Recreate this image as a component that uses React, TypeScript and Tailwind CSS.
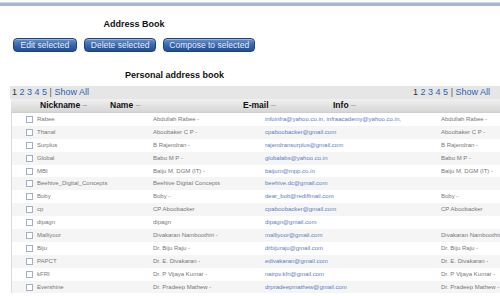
import React from "react";

interface Contact {
  nick: string;
  name: string;
  email: string;
  info: string;
}

const contacts: Contact[] = [
  { nick: "Rabee", name: "Abdullah Rabee -", email: "infoinfra@yahoo.co.in, infraacademy@yahoo.co.in,", info: "Abdullah Rabee -" },
  { nick: "Thanal", name: "Aboobaker C P -", email: "cpaboobacker@gmail.com", info: "Aboobaker C P -" },
  { nick: "Surplus", name: "B Rajendran -", email: "rajendransurplus@gmail.com", info: "B Rajendran -" },
  { nick: "Global", name: "Babu M P -", email: "globalabs@yahoo.co.in", info: "Babu M P -" },
  { nick: "MBI", name: "Baiju M, DGM (IT) -", email: "baijum@mpp.co.in", info: "Baiju M, DGM (IT) -" },
  { nick: "Beehive_Digital_Concepts", name: "Beehive Digital Concepts", email: "beehive.dc@gmail.com", info: "" },
  { nick: "Boby", name: "Boby -", email: "dear_bob@rediffmail.com", info: "Boby -" },
  { nick: "cp", name: "CP Aboobacker", email: "cpaboobacker@gmail.com", info: "CP Aboobacker" },
  { nick: "dipagn", name: "dipagn", email: "dipagn@gmail.com", info: "" },
  { nick: "Malliyoor", name: "Divakaran Namboothiri -", email: "malliyoor@gmail.com", info: "Divakaran Namboothiri -" },
  { nick: "Biju", name: "Dr. Biju Raju -", email: "drbijuraju@gmail.com", info: "Dr. Biju Raju -" },
  { nick: "PAPCT", name: "Dr. E. Divakaran -", email: "edivakaran@gmail.com", info: "Dr. E. Divakaran -" },
  { nick: "kFRI", name: "Dr. P Vijaya Kumar -", email: "nairpv.kfri@gmail.com", info: "Dr. P Vijaya Kumar -" },
  { nick: "Evershine", name: "Dr. Pradeep Mathew -", email: "drpradeepmathew@gmail.com", info: "Dr. Pradeep Mathew -" },
];

function Button({ label, width }: { label: string; width: string }) {
  return (
    <button
      className={`${width} h-[14px] rounded-[4px] border border-[#1d447f] bg-gradient-to-b from-[#6a91cc] via-[#3a68ad] to-[#204f94] text-[8.5px] leading-none text-[#e3eaf6] shadow-[inset_0_1px_0_rgba(255,255,255,0.35)]`}
    >
      {label}
    </button>
  );
}

function Pager() {
  return (
    <span className="text-[9px] text-[#333]">
      1{" "}
      <span className="text-[#2f62b0]">2 3 4 5</span>
      <span className="text-[#555]"> | </span>
      <span className="text-[#2f62b0]">Show All</span>
    </span>
  );
}

function HeaderCell({ label, className }: { label: string; className: string }) {
  return (
    <span className={`${className} font-bold text-[8.5px] text-[#111]`}>
      {label} <span className="font-normal text-[#999]">–</span>
    </span>
  );
}

export default function App() {
  return (
    <div className="w-[500px] h-[296px] overflow-hidden bg-white font-['Liberation_Sans',Arial,sans-serif]">
      <div className="mt-[2px] h-[1px] bg-[#d3dbe6]" />
      <div className="h-[3px] bg-[#a9b7cb]" />

      <div className="w-[242px] ml-[13px]">
        <h1 className="mt-[12px] text-center text-[9px] font-bold leading-[12px] text-[#111]">
          Address Book
        </h1>
        <div className="mt-[8px] flex gap-[7px]">
          <Button label="Edit selected" width="w-[64px]" />
          <Button label="Delete selected" width="w-[73px]" />
          <Button label="Compose to selected" width="w-[92px]" />
        </div>
      </div>

      <h2 className="mt-[17px] ml-[125px] text-[9px] font-bold leading-[12px] text-[#111]">
        Personal address book
      </h2>

      <div className="mt-[5px] ml-[10px] h-[13px] flex items-center justify-between bg-[#e6e6e6] pl-[2px] pr-[10px]">
        <Pager />
        <Pager />
      </div>

      <div className="ml-[11px] h-[14px] flex items-center bg-gradient-to-b from-[#f0f0f0] to-[#d6d6d6] border-b border-[#cfcfcf]">
        <HeaderCell label="Nickname" className="ml-[29px] w-[70px]" />
        <HeaderCell label="Name" className="w-[133px]" />
        <HeaderCell label="E-mail" className="w-[90px]" />
        <HeaderCell label="Info" className="" />
      </div>

      <div className="ml-[11px] border-l border-[#dcdcdc]">
        {contacts.map((c, i) => (
          <div
            key={c.nick}
            className={`h-[12.9px] flex items-center whitespace-nowrap text-[6px] text-[#777] ${
              i % 2 === 1 ? "bg-[#f5f5f5]" : "bg-white"
            }`}
          >
            <span className="ml-[14px] w-[7px] h-[7px] border border-[#9fb0c8] bg-white shrink-0" />
            <span className="ml-[4px] w-[116px] shrink-0">{c.nick}</span>
            <span className="w-[112px] shrink-0">{c.name}</span>
            <span className="w-[176px] shrink-0 text-[#5b80c4]">{c.email}</span>
            <span className="shrink-0">{c.info}</span>
          </div>
        ))}
      </div>
    </div>
  );
}
